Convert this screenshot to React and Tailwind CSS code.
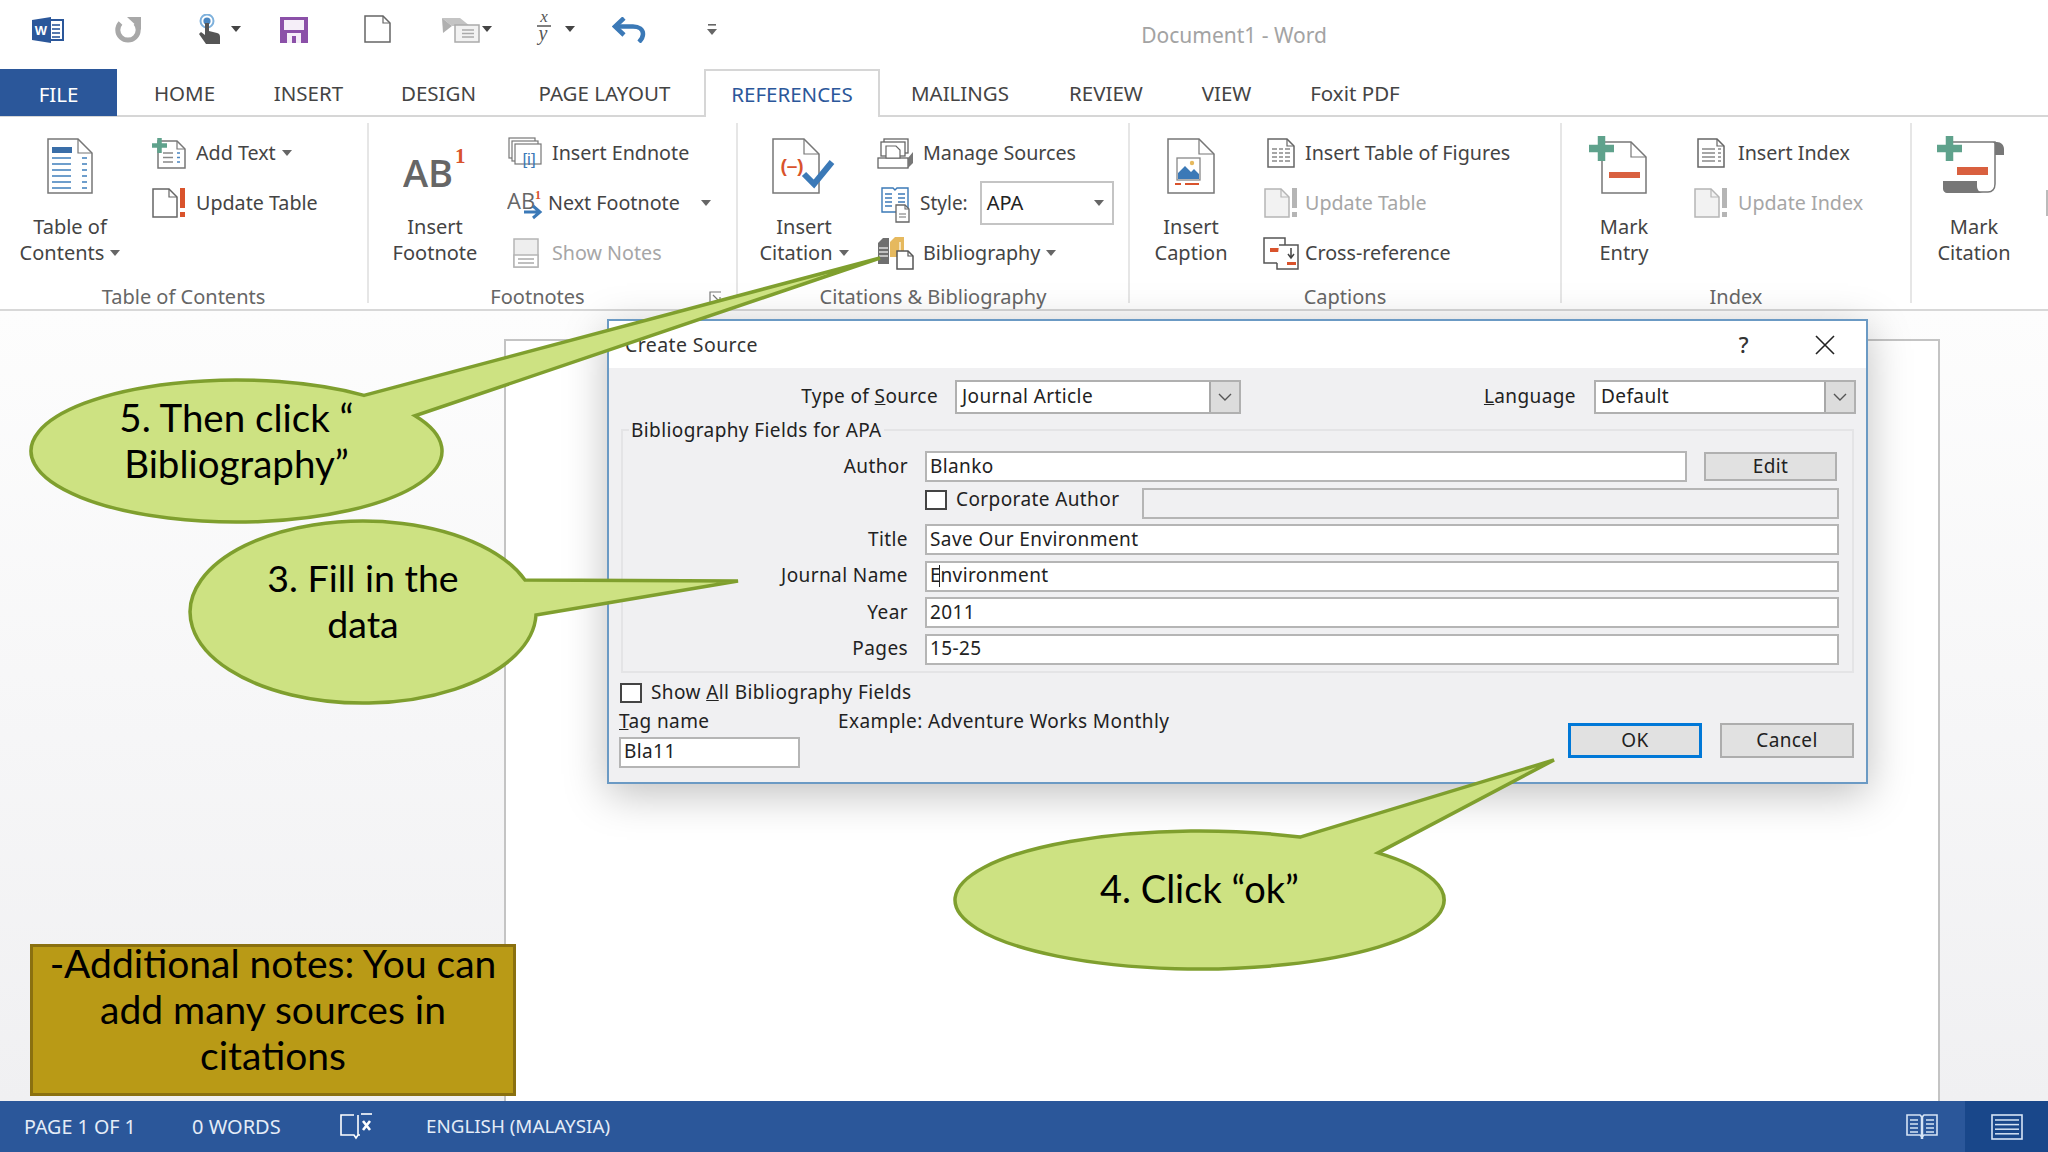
import React from "react";

const Caret = ({ c = "#666", cls = "" }) => (
  <svg width="10" height="6" viewBox="0 0 10 6" className={`shrink-0 ${cls}`}><path d="M0 0H10L5 6Z" fill={c} /></svg>
);

const Doc = ({ x = 0, y = 0, w, h, f = 10, s = "#777", fill = "#fff", sw = 1.5 }) => (
  <g>
    <path d={`M${x} ${y}H${x + w - f}L${x + w} ${y + f}V${y + h}H${x}Z`} fill={fill} stroke={s} strokeWidth={sw} />
    <path d={`M${x + w - f} ${y}V${y + f}H${x + w}`} fill="none" stroke={s} strokeWidth={sw * 0.8} />
  </g>
);

const Plus = ({ x, y, s = 30 }) => {
  const t = s * 0.3;
  return <path d={`M${x + (s - t) / 2} ${y}h${t}v${(s - t) / 2}h${(s - t) / 2}v${t}h${-(s - t) / 2}v${(s - t) / 2}h${-t}v${-(s - t) / 2}h${-(s - t) / 2}v${-t}h${(s - t) / 2}z`} fill="#5fa28c" />;
};

const Lines = ({ x, y, w, n, gap = 5, c = "#999", sw = 1.5 }) => (
  <g stroke={c} strokeWidth={sw}>
    {Array.from({ length: n }).map((_, i) => (
      <line key={i} x1={x} x2={x + w} y1={y + i * gap} y2={y + i * gap} />
    ))}
  </g>
);

const I = {
  Word: () => (
    <svg width="32" height="26" viewBox="0 0 32 26">
      <rect x="12" y="3" width="19" height="20" fill="#fff" stroke="#2b579a" strokeWidth="2" />
      <Lines x={20} y={8} w={8} n={4} gap={4} c="#2b579a" sw={1.6} />
      <path d="M0 3L19 0V26L0 23Z" fill="#2b579a" />
      <text x="9" y="18" fontSize="13" fontWeight="700" fill="#fff" textAnchor="middle" fontFamily="Liberation Sans">W</text>
    </svg>
  ),
  Refresh: () => (
    <svg width="30" height="26" viewBox="0 0 30 26">
      <path d="M8.5 6A10.2 10.2 0 1 0 23.5 6" fill="none" stroke="#a8a8a8" strokeWidth="5" />
      <path d="M15 0H29V13Z" fill="#a8a8a8" />
    </svg>
  ),
  Touch: () => (
    <svg width="24" height="30" viewBox="0 0 24 30">
      <circle cx="9" cy="7" r="6.5" fill="none" stroke="#7eb1dc" strokeWidth="2" />
      <circle cx="9" cy="7" r="3.6" fill="#4a86c0" />
      <path d="M7 9h4v8l8 2c2 .5 3 1.5 3 4v7H8L1 20l2-2 4 3Z" fill="#555" />
    </svg>
  ),
  Save: () => (
    <svg width="28" height="26" viewBox="0 0 28 26">
      <path d="M0 0H28V26H0Z" fill="#8b50a8" />
      <rect x="4" y="3" width="20" height="10" fill="#f5eef8" />
      <rect x="7" y="16" width="14" height="10" fill="#f5eef8" />
      <rect x="12" y="19" width="4" height="7" fill="#8b50a8" />
    </svg>
  ),
  Page: () => (
    <svg width="27" height="28" viewBox="0 0 27 28"><Doc x={1} y={1} w={25} h={26} f={7} s="#666" /></svg>
  ),
  Slides: () => (
    <svg width="38" height="26" viewBox="0 0 38 26">
      <path d="M0 1H18L28 9H10Z" fill="#c4c4c4" />
      <path d="M0 1L10 9L1 16Z" fill="#b0b0b0" />
      <rect x="13" y="8" width="24" height="17" fill="#f2f2f2" stroke="#aaa" strokeWidth="1.5" />
      <Lines x={20} y={13} w={12} n={3} gap={3.5} c="#aaa" />
    </svg>
  ),
  Formula: () => (
    <svg width="18" height="42" viewBox="0 0 18 42">
      <text x="9" y="16" fontSize="17" fontStyle="italic" textAnchor="middle" fill="#555" fontFamily="Liberation Serif">x</text>
      <line x1="2" x2="16" y1="20" y2="20" stroke="#555" strokeWidth="1.5" />
      <text x="8" y="34" fontSize="20" fontStyle="italic" textAnchor="middle" fill="#555" fontFamily="Liberation Serif">y</text>
    </svg>
  ),
  Undo: () => (
    <svg width="34" height="26" viewBox="0 0 34 26">
      <path d="M4 9.5H21C27 9.5 31 12.5 31 17C31 20 29.5 22.5 27 25" fill="none" stroke="#3b79b7" strokeWidth="4.5" />
      <path d="M12 1L3 9.5L12 18" fill="none" stroke="#3b79b7" strokeWidth="4.5" />
    </svg>
  ),
  Custom: () => (
    <svg width="10" height="14" viewBox="0 0 10 14">
      <rect x="1" y="0" width="8" height="1.6" fill="#666" />
      <path d="M0 5H10L5 11Z" fill="#666" />
    </svg>
  ),
  Toc: () => (
    <svg width="46" height="56" viewBox="0 0 46 56">
      <Doc x={1} y={1} w={44} h={54} f={14} s="#777" />
      <rect x="5" y="9" width="20" height="6" fill="#3a6ea8" />
      <Lines x={5} y={20} w={19} n={6} gap={6} c="#4a86c0" sw={1.6} />
      <Lines x={35} y={20} w={5} n={6} gap={6} c="#4a86c0" sw={1.6} />
    </svg>
  ),
  AddText: () => (
    <svg width="34" height="31" viewBox="0 0 34 31">
      <Doc x={6} y={3} w={27} h={27} f={8} s="#777" />
      <Lines x={11} y={15} w={10} n={3} gap={4.5} c="#888" />
      <Lines x={25} y={15} w={3} n={3} gap={4.5} c="#4a86c0" />
      <Plus x={0} y={0} s={15} />
    </svg>
  ),
  Update: ({ grey }) => (
    <svg width="35" height="30" viewBox="0 0 35 30">
      <Doc x={1} y={1} w={24} h={28} f={8} s={grey ? "#b5b5b5" : "#666"} fill={grey ? "#f2f2f2" : "#fff"} />
      <rect x="28" y="0" width="5" height="20" fill={grey ? "#b5b5b5" : "#d9532c"} />
      <rect x="28" y="24" width="5" height="5" fill={grey ? "#b5b5b5" : "#d9532c"} />
    </svg>
  ),
  AB: () => (
    <svg width="66" height="66" viewBox="0 0 66 66">
      <text x="0" y="51" fontSize="38" fontWeight="600" fill="#666" fontFamily="Open Sans">AB</text>
      <text x="52" y="27" fontSize="21" fontWeight="600" fill="#d9532c" fontFamily="Liberation Serif">1</text>
    </svg>
  ),
  Endnote: () => (
    <svg width="36" height="33" viewBox="0 0 36 33">
      <rect x="1" y="1" width="26" height="20" fill="#fff" stroke="#777" strokeWidth="1.2" />
      <rect x="4" y="4" width="26" height="20" fill="#fff" stroke="#777" strokeWidth="1.2" />
      <rect x="7" y="7" width="26" height="20" fill="#fff" stroke="#777" strokeWidth="1.2" />
      <text x="21" y="28" fontSize="17" fill="#3b79b7" textAnchor="middle" fontFamily="Liberation Sans">[i]</text>
    </svg>
  ),
  NextFoot: () => (
    <svg width="38" height="38" viewBox="0 0 38 38">
      <text x="0" y="25" fontSize="22" fontWeight="500" fill="#666" fontFamily="Open Sans">AB</text>
      <text x="28" y="15" fontSize="12" fontWeight="700" fill="#d9532c" fontFamily="Liberation Serif">1</text>
      <path d="M17 28H32M26 22L33 28L26 34" fill="none" stroke="#3b79b7" strokeWidth="3" />
    </svg>
  ),
  ShowNotes: () => (
    <svg width="26" height="30" viewBox="0 0 26 30">
      <rect x="1" y="1" width="24" height="28" fill="#eee" stroke="#b5b5b5" strokeWidth="1.5" />
      <rect x="1" y="17" width="24" height="12" fill="#fff" stroke="#b5b5b5" strokeWidth="1.5" />
      <Lines x={5} y={21} w={16} n={2} gap={4} c="#aaa" />
    </svg>
  ),
  Citation: () => (
    <svg width="64" height="56" viewBox="0 0 64 56">
      <Doc x={1} y={1} w={46} h={54} f={15} s="#777" />
      <text x="20" y="34" fontSize="19" fontWeight="700" fill="#d9532c" textAnchor="middle" fontFamily="Liberation Sans">(–)</text>
      <path d="M32 36L42 46L60 24" fill="none" stroke="#3b79b7" strokeWidth="6" />
    </svg>
  ),
  Manage: () => (
    <svg width="38" height="31" viewBox="0 0 38 31">
      <rect x="8" y="1" width="24" height="14" fill="#fff" stroke="#666" strokeWidth="1.3" />
      <rect x="5" y="4" width="24" height="14" fill="#fff" stroke="#666" strokeWidth="1.3" />
      <rect x="2" y="20" width="30" height="10" fill="#fff" stroke="#666" strokeWidth="1.3" />
      <path d="M32 30L37 25V14L32 20Z" fill="#777" />
      <path d="M10 8H20L24 12V20H10Z" fill="#fff" stroke="#666" strokeWidth="1.2" />
    </svg>
  ),
  Style: () => (
    <svg width="29" height="36" viewBox="0 0 29 36">
      <path d="M1 1H12L14 3L16 1H27V25H1Z" fill="#fff" stroke="#3b79b7" strokeWidth="1.4" />
      <Lines x={4} y={7} w={7} n={4} gap={4} c="#3b79b7" />
      <Lines x={17} y={7} w={7} n={4} gap={4} c="#3b79b7" />
      <Doc x={15} y={18} w={13} h={17} f={4} s="#666" sw={1.3} />
      <Lines x={18} y={27} w={7} n={2} gap={3} c="#888" sw={1.2} />
    </svg>
  ),
  Biblio: () => (
    <svg width="37" height="33" viewBox="0 0 37 33">
      <path d="M1 6L6 1H12V27H1Z" fill="#6f6f6f" />
      <Lines x={2} y={11} w={9} n={3} gap={4} c="#ddd" />
      <path d="M13 5L18 0H27V20H13Z" fill="#e6b95e" />
      <rect x="22" y="5" width="2" height="12" fill="#f6e3ba" />
      <Doc x={20} y={14} w={16} h={18} f={5} s="#555" />
    </svg>
  ),
  Caption: () => (
    <svg width="48" height="56" viewBox="0 0 48 56">
      <Doc x={1} y={1} w={46} h={54} f={15} s="#777" />
      <rect x="10" y="20" width="23" height="22" fill="#fff" stroke="#888" strokeWidth="1.3" />
      <path d="M11 41V35L18 28L24 34L27 31L32 36V41Z" fill="#3b79b7" />
      <circle cx="25" cy="25" r="2.2" fill="#e6b95e" />
      <path d="M8 46H14M18 46H32" stroke="#d9532c" strokeWidth="2" />
    </svg>
  ),
  Figures: () => (
    <svg width="28" height="30" viewBox="0 0 28 30">
      <Doc x={1} y={1} w={26} h={28} f={7} s="#666" />
      <Lines x={5} y={11} w={5} n={4} gap={4} c="#888" />
      <Lines x={12} y={11} w={4} n={4} gap={4} c="#888" />
      <Lines x={18} y={11} w={5} n={4} gap={4} c="#888" />
    </svg>
  ),
  Cross: () => (
    <svg width="36" height="33" viewBox="0 0 36 33">
      <rect x="1" y="1" width="21" height="25" fill="#fff" stroke="#555" strokeWidth="1.5" />
      <rect x="7" y="11" width="11" height="4" fill="#d9532c" />
      <path d="M16 8H35V32H14V26" fill="#fff" stroke="#555" strokeWidth="1.5" />
      <path d="M28 11V20M25 17L28 21L31 17" fill="none" stroke="#444" strokeWidth="1.5" />
      <rect x="24" y="25" width="9" height="3" fill="#d9532c" />
    </svg>
  ),
  MarkEntry: () => (
    <svg width="58" height="58" viewBox="0 0 58 58">
      <Doc x={13} y={6} w={44} h={51} f={15} s="#777" />
      <rect x="20" y="36" width="31" height="6" fill="#d9603f" />
      <Plus x={0} y={0} s={25} />
    </svg>
  ),
  Index: () => (
    <svg width="28" height="30" viewBox="0 0 28 30">
      <Doc x={1} y={1} w={26} h={28} f={7} s="#666" />
      <Lines x={5} y={11} w={13} n={4} gap={4} c="#888" />
      <Lines x={21} y={11} w={3} n={4} gap={4} c="#888" />
    </svg>
  ),
  MarkCit: () => (
    <svg width="68" height="58" viewBox="0 0 68 58">
      <path d="M15 6H58V48C58 53 55 56 51 56H20" fill="#fff" stroke="#777" strokeWidth="1.5" />
      <path d="M56 6H60C64 6 67 9 67 13V19H58V8Z" fill="#777" />
      <path d="M6 45H40V50C40 54 43 57 46 57H10C8 57 6 55 6 53Z" fill="#777" />
      <rect x="20" y="31" width="31" height="8" fill="#d9603f" />
      <Plus x={0} y={0} s={25} />
    </svg>
  ),
  Launcher: () => (
    <svg width="13" height="13" viewBox="0 0 13 13">
      <path d="M1 12V1H12" fill="none" stroke="#777" strokeWidth="1.2" />
      <path d="M4 4L11 11M11 6V11H6" fill="none" stroke="#777" strokeWidth="1.2" />
    </svg>
  ),
};

const tabs = [
  ["HOME", "w-[121px] ml-[7px]"],
  ["INSERT", "w-[127px]"],
  ["DESIGN", "w-[133px]"],
  ["PAGE LAYOUT", "w-[199px]"],
];
const tabsR = [
  ["MAILINGS", "w-[160px]"],
  ["REVIEW", "w-[132px]"],
  ["VIEW", "w-[109px]"],
  ["Foxit PDF", "w-[148px]"],
];

const Group = ({ w, label, labelCls = "", children, last }) => (
  <div className={`${w} h-[180px] flex flex-col ${last ? "" : "border-r-2 border-[#e6e6e6]"}`}>
    <div className="h-[162px] shrink-0 flex">{children}</div>
    <div className={`relative h-[24px] shrink-0 leading-[24px] text-center text-[20px] text-[#666] ${labelCls}`}>{label}</div>
  </div>
);

const Big = ({ w, icon, top, l1, l2, caret }) => (
  <div className={`${w} flex flex-col items-center`}>
    <div className={`h-[91px] ${top}`}>{icon}</div>
    <div className="text-[20px] leading-[26px] text-center text-[#444]">
      <div>{l1}</div>
      <div className="flex items-center justify-center gap-[6px]">{l2}{caret && <Caret />}</div>
    </div>
  </div>
);

const Small = ({ icon, text, grey, cls = "", caret, caretCls = "ml-[8px]" }) => (
  <div className="h-[50px] flex items-center">
    <div className="w-[50px] flex justify-center">{icon}</div>
    <span className={`text-[19.7px] whitespace-nowrap ${grey ? "text-[#a6a6a6]" : "text-[#444]"} ${cls}`}>{text}</span>
    {caret && <Caret cls={caretCls} />}
  </div>
);

const Box = ({ cls = "", children }) => (
  <div className={`h-[31px] border-2 border-[#b5b5b5] bg-white flex items-center pl-[3px] pb-[1px] text-[19px] text-[#222] ${cls}`}>{children}</div>
);

const Check = ({ cls = "" }) => <div className={`w-[22px] h-[20px] border-2 border-[#444] bg-white ${cls}`} />;

const Select = ({ w, text }) => (
  <div className={`${w} h-[34px] border-2 border-[#b0b0b0] bg-white flex text-[19px] text-[#222]`}>
    <div className="flex-1 flex items-center pl-[5px] pb-[1px]">{text}</div>
    <div className="w-[30px] bg-[#dcdcdc] border-l-2 border-[#a8a8a8] flex items-center justify-center">
      <svg width="14" height="8" viewBox="0 0 14 8"><path d="M1 1L7 7L13 1" fill="none" stroke="#555" strokeWidth="1.4" /></svg>
    </div>
  </div>
);

const Label = ({ children }) => <div className="w-[285px] text-right mr-[17px] pb-[1px] text-[19px] text-[#222]">{children}</div>;

const Callouts = () => (
  <svg width="2048" height="1152" viewBox="0 0 2048 1152" className="absolute left-0 top-0 pointer-events-none">
    <g fill="#cde282" stroke="#7f9f2e" strokeWidth="3.5" strokeLinejoin="miter">
      <path d="M364 395.32L880 258L415 415.82A205.5 71 0 1 1 364 395.32Z" />
      <path d="M525 580L738 581L536 615A173 91 0 1 1 525 580Z" />
      <path d="M1300 837.1L1554 760L1378 852.85A244.5 69 0 1 1 1300 837.1Z" />
    </g>
  </svg>
);

export default function App() {
  return (
    <div className="relative w-[2048px] h-[1152px] overflow-hidden bg-white flex flex-col font-['Noto_Sans',sans-serif]">
      {/* quick access */}
      <div className="h-[69px] flex items-start text-[#555]">
        <div className="ml-[32px] mt-[17px]"><I.Word /></div>
        <div className="ml-[48px] mt-[17px]"><I.Refresh /></div>
        <div className="ml-[56px] mt-[14px]"><I.Touch /></div>
        <Caret c="#444" cls="ml-[9px] mt-[26px]" />
        <div className="ml-[39px] mt-[17px]"><I.Save /></div>
        <div className="ml-[56px] mt-[15px]"><I.Page /></div>
        <div className="ml-[51px] mt-[17px]"><I.Slides /></div>
        <Caret c="#444" cls="ml-[2px] mt-[26px]" />
        <div className="ml-[43px] mt-[6px]"><I.Formula /></div>
        <Caret c="#444" cls="ml-[12px] mt-[26px]" />
        <div className="ml-[37px] mt-[17px]"><I.Undo /></div>
        <div className="ml-[61px] mt-[24px]"><I.Custom /></div>
        <div className="ml-auto mr-[721px] mt-[21px] text-[21px] leading-[28px] text-[#a3a3a3]">Document1 - Word</div>
      </div>

      {/* tabs */}
      <div className="h-[48px] flex border-b-2 border-[#d6d6d6] text-[20.5px] text-[#444]">
        <div className="w-[117px] h-[47px] bg-[#2b579a] text-white flex items-center justify-center pt-[3px]">FILE</div>
        {tabs.map(([t, c]) => (
          <div key={t} className={`${c} h-[46px] flex items-center justify-center pt-[3px]`}>{t}</div>
        ))}
        <div className="w-[176px] h-[48px] bg-white border-2 border-b-0 border-[#d6d6d6] flex items-center justify-center text-[#2b579a]">REFERENCES</div>
        {tabsR.map(([t, c]) => (
          <div key={t} className={`${c} h-[46px] flex items-center justify-center pt-[3px]`}>{t}</div>
        ))}
      </div>

      {/* ribbon */}
      <div className="h-[194px] pt-[6px] border-b-2 border-[#d8d8d8] flex">
        <Group w="w-[369px]" label="Table of Contents">
          <Big w="w-[140px]" top="pt-[15px]" icon={<I.Toc />} l1="Table of" l2="Contents" caret />
          <div className="ml-[4px] mt-[5px]">
            <Small icon={<I.AddText />} text="Add Text" cls="ml-[2px]" caret caretCls="ml-[6px]" />
            <Small icon={<I.Update />} text="Update Table" cls="ml-[2px]" />
          </div>
        </Group>
        <Group w="w-[369px]" label="Footnotes" labelCls="pr-[30px]">
          <Big w="w-[132px]" top="pt-[13px] pl-[2px]" icon={<I.AB />} l1="Insert" l2="Footnote" />
          <div className="mt-[5px]">
            <Small icon={<I.Endnote />} text="Insert Endnote" cls="ml-[1px]" />
            <Small icon={<I.NextFoot />} text="Next Footnote" cls="ml-[-3px]" caret caretCls="ml-[21px]" />
            <Small icon={<I.ShowNotes />} text="Show Notes" grey cls="ml-[1px]" />
          </div>
        </Group>
        <Group w="w-[392px]" label="Citations & Bibliography">
          <Big w="w-[132px]" top="pt-[15px]" icon={<I.Citation />} l1="Insert" l2="Citation" caret />
          <div className="mt-[5px]">
            <Small icon={<I.Manage />} text="Manage Sources" cls="ml-[3px]" />
            <div className="h-[50px] flex items-center">
              <div className="w-[50px] flex justify-center pt-[3px]"><I.Style /></div>
              <span className="text-[19px] text-[#444]">Style:</span>
              <div className="ml-[12px] w-[134px] h-[44px] border-2 border-[#c4c4c4] flex items-center justify-between px-[5px] text-[20px] text-[#222]">
                <span>APA</span><Caret cls="mr-[3px]" />
              </div>
            </div>
            <Small icon={<I.Biblio />} text="Bibliography" cls="ml-[3px]" caret caretCls="ml-[6px]" />
          </div>
        </Group>
        <Group w="w-[432px]" label="Captions">
          <Big w="w-[122px]" top="pt-[15px]" icon={<I.Caption />} l1="Insert" l2="Caption" />
          <div className="ml-[4px] mt-[5px]">
            <Small icon={<I.Figures />} text="Insert Table of Figures" cls="-ml-[1px]" />
            <Small icon={<I.Update grey />} text="Update Table" grey cls="-ml-[1px]" />
            <Small icon={<I.Cross />} text="Cross-reference" cls="-ml-[1px]" />
          </div>
        </Group>
        <Group w="w-[350px]" label="Index">
          <Big w="w-[124px]" top="pt-[13px] mr-[12px]" icon={<I.MarkEntry />} l1="Mark" l2="Entry" />
          <div className="mt-[5px]">
            <Small icon={<I.Index />} text="Insert Index" cls="ml-[2px]" />
            <Small icon={<I.Update grey />} text="Update Index" grey cls="ml-[2px]" />
          </div>
        </Group>
        <Group w="w-[136px]" label="" last>
          <Big w="w-[124px]" top="pt-[13px] mr-[6px]" icon={<I.MarkCit />} l1="Mark" l2="Citation" />
          <div className="ml-[10px] mt-[67px] w-[2px] h-[26px] bg-[#bbb]" />
        </Group>
      </div>

      {/* document */}
      <div className="flex-1 min-h-0 pl-[504px] pt-[28px] bg-gradient-to-b from-[#fdfdfd] to-[#f0f0f2]">
        <div className="w-[1436px] h-full bg-white border-2 border-b-0 border-[#c4c4c4]" />
      </div>

      {/* status */}
      <div className="h-[51px] bg-[#2b579a] flex items-center text-[#e4ecf7]">
        <span className="ml-[24px] w-[168px] text-[19.7px]">PAGE 1 OF 1</span>
        <span className="w-[148px] text-[20px]">0 WORDS</span>
        <svg width="33" height="28" viewBox="0 0 33 28" className="mb-[2px]">
          <path d="M14 3H1V23H14L16 26L18 23H20M18 3V23" fill="none" stroke="#fff" strokeWidth="1.6" />
          <path d="M21 2H32" stroke="#fff" strokeWidth="1.6" />
          <path d="M23 9L30 18M30 9L23 18" stroke="#fff" strokeWidth="2.6" />
        </svg>
        <span className="ml-[53px] text-[18.8px]">ENGLISH (MALAYSIA)</span>
        <div className="ml-auto mr-[27px]">
          <svg width="32" height="26" viewBox="0 0 32 26">
            <path d="M1 1H14L16 3L18 1H31V21H18L16 23L14 21H1Z" fill="none" stroke="#d6e4f5" strokeWidth="1.6" />
            <Lines x={4} y={6} w={8} n={4} gap={4} c="#d6e4f5" />
            <Lines x={20} y={6} w={8} n={4} gap={4} c="#d6e4f5" />
            <path d="M16 2V25" stroke="#d6e4f5" strokeWidth="2.5" />
          </svg>
        </div>
        <div className="w-[83px] h-full bg-[#19478a] flex items-center justify-center">
          <svg width="32" height="26" viewBox="0 0 32 26">
            <rect x="1" y="1" width="30" height="24" fill="none" stroke="#d6e4f5" strokeWidth="1.6" />
            <Lines x={4} y={6} w={24} n={4} gap={4.6} c="#d6e4f5" />
          </svg>
        </div>
      </div>

      {/* dialog */}
      <div className="absolute left-[607px] top-[319px] w-[1261px] h-[465px] border-2 border-[#6b9ac4] bg-[#f0f0f2] flex flex-col tracking-[0.4px] shadow-[0_10px_40px_rgba(0,0,0,0.25)]">
        <div className="h-[47px] bg-white flex items-center pl-[16px] text-[19.5px] text-[#333]">
          <span>Create Source</span>
          <span className="ml-auto text-[22px] text-[#333] font-medium">?</span>
          <svg width="20" height="20" viewBox="0 0 20 20" className="ml-[66px] mr-[31px]">
            <path d="M1 1L19 19M19 1L1 19" stroke="#222" strokeWidth="1.6" />
          </svg>
        </div>
        <div className="mt-[12px] h-[34px] flex items-center">
          <div className="w-[329px] text-right mr-[17px] pb-[1px] text-[19px] text-[#222]">
            Type of <span className="underline">S</span>ource
          </div>
          <Select w="w-[286px]" text="Journal Article" />
          <div className="ml-auto mr-[18px] pb-[1px] text-[19px] text-[#222]"><span className="underline">L</span>anguage</div>
          <div className="mr-[10px]"><Select w="w-[262px]" text="Default" /></div>
        </div>
        <fieldset className="mt-[4px] ml-[12px] w-[1233px] border-2 border-[#e4e4e6] pb-[6px]">
          <legend className="ml-[6px] px-[2px] text-[19px] leading-[24px] text-[#222]">Bibliography Fields for APA</legend>
          <div className="flex flex-col gap-[5.5px] pt-[9px]">
            <div className="flex items-center h-[31px]">
              <Label>Author</Label>
              <Box cls="w-[762px]">Blanko</Box>
              <div className="ml-[17px] w-[133px] h-[29px] bg-[#e1e1e1] border-2 border-[#b0b0b0] flex items-center justify-center text-[19px] text-[#222]">Edit</div>
            </div>
            <div className="flex items-center h-[31px]">
              <div className="w-[302px]" />
              <Check cls="mb-[7px]" />
              <div className="ml-[9px] w-[186px] mb-[7px] text-[19px] text-[#222]">Corporate Author</div>
              <Box cls="w-[697px] !bg-[#f0f0f2]" />
            </div>
            <div className="flex items-center h-[31px]"><Label>Title</Label><Box cls="w-[914px]">Save Our Environment</Box></div>
            <div className="flex items-center h-[31px]">
              <Label>Journal Name</Label>
              <Box cls="w-[914px]">E<span className="inline-block w-[1.5px] h-[22px] bg-[#222] -ml-[2px]" />nvironment</Box>
            </div>
            <div className="flex items-center h-[31px]"><Label>Year</Label><Box cls="w-[914px]">2011</Box></div>
            <div className="flex items-center h-[31px]"><Label>Pages</Label><Box cls="w-[914px]">15-25</Box></div>
          </div>
        </fieldset>
        <div className="mt-[10px] ml-[11px] h-[20px] flex items-center">
          <Check />
          <span className="ml-[9px] text-[19px] text-[#222]">Show <span className="underline">A</span>ll Bibliography Fields</span>
        </div>
        <div className="mt-[6px] ml-[10px] flex items-start">
          <div className="w-[219px]">
            <div className="h-[26px] leading-[24px] text-[19px] text-[#222]"><span className="underline">T</span>ag name</div>
            <Box cls="w-[181px] mt-[2px]">Bla11</Box>
          </div>
          <div className="leading-[24px] text-[19px] text-[#222]">Example: Adventure Works Monthly</div>
          <div className="ml-auto mr-[12px] mt-[14px] flex gap-[18px] text-[19px] text-[#222]">
            <div className="w-[134px] h-[35px] bg-[#e1e1e1] border-[3px] border-[#0078d7] flex items-center justify-center">OK</div>
            <div className="w-[134px] h-[35px] bg-[#e1e1e1] border-2 border-[#adadad] flex items-center justify-center">Cancel</div>
          </div>
        </div>
      </div>

      {/* footnotes launcher */}
      <div className="absolute left-[709px] top-[291px]"><I.Launcher /></div>

      {/* callouts */}
      <Callouts />
      <div className="absolute left-[31px] top-[394px] w-[411px] text-center font-['Lato',sans-serif] text-[38.5px] leading-[46px] text-black">
        <div>5. Then click “</div>
        <div>Bibliography”</div>
      </div>
      <div className="absolute left-[190px] top-[555px] w-[346px] text-center font-['Lato',sans-serif] text-[37.5px] leading-[46px] text-black">
        <div>3. Fill in the</div>
        <div>data</div>
      </div>
      <div className="absolute left-[955px] top-[865px] w-[489px] text-center font-['Lato',sans-serif] text-[38px] leading-[46px] text-black">4. Click “ok”</div>
      <div className="absolute left-[30px] top-[944px] w-[486px] h-[152px] border-[3px] border-[#8a7010] bg-[#b99a16] text-center font-['Lato',sans-serif] text-[39px] leading-[46px] text-black">
        <div className="mt-[-7px]">-Additional notes: You can</div>
        <div>add many sources in</div>
        <div>citations</div>
      </div>
    </div>
  );
}
